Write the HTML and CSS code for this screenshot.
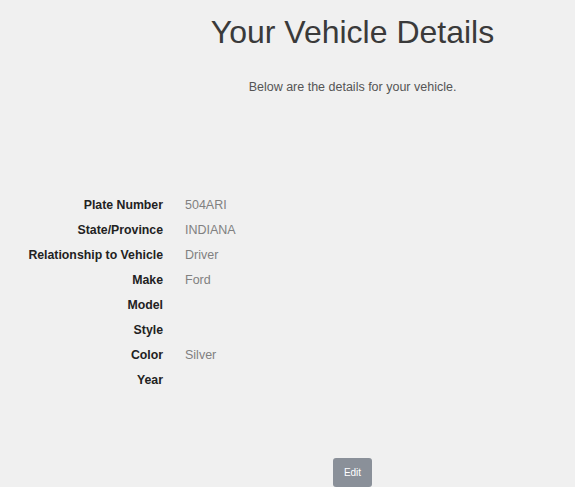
FILE: index.html
```html
<!DOCTYPE html>
<html lang="en">
<head>
    <meta charset="UTF-8">
    <meta name="viewport" content="width=device-width, initial-scale=1.0">
    <title>Your Vehicle Details</title>
    <link rel="stylesheet" href="styles.css">
</head>
<body>
    <div class="page">
        <div class="header">
            <h1>Your Vehicle Details</h1>
            <p class="intro">Below are the details for your vehicle.</p>
        </div>
        <div class="details">
            <div class="label">Plate Number</div>
            <div class="value">504ARI</div>
            <div class="label">State/Province</div>
            <div class="value">INDIANA</div>
            <div class="label">Relationship to Vehicle</div>
            <div class="value">Driver</div>
            <div class="label">Make</div>
            <div class="value">Ford</div>
            <div class="label">Model</div>
            <div class="value"></div>
            <div class="label">Style</div>
            <div class="value"></div>
            <div class="label">Color</div>
            <div class="value">Silver</div>
            <div class="label">Year</div>
            <div class="value"></div>
        </div>
        <div class="actions">
            <button class="edit-btn">Edit</button>
        </div>
    </div>
</body>
</html>
```

FILE: styles.css
```css
body {
    margin: 0;
    background-color: #f0f0f0;
    font-family: "Liberation Sans", Arial, sans-serif;
    color: #333;
}
.page {
    height: 487px;
    overflow: hidden;
}
.header {
    margin-left: 130px;
    text-align: center;
    padding-top: 13px;
}
.header h1 {
    font-size: 32px;
    font-weight: normal;
    margin: 0;
    line-height: 38px;
    color: #3a3a3a;
}
.intro {
    font-size: 12.5px;
    color: #555;
    margin: 29px 0 0;
    line-height: 14px;
}
.details {
    display: grid;
    grid-template-columns: 155px 1fr;
    column-gap: 22px;
    margin-top: 99px;
    margin-left: 8px;
    font-size: 12.5px;
}
.details .label,
.details .value {
    height: 25px;
    line-height: 25px;
}
.details .label {
    text-align: right;
    font-weight: bold;
    font-size: 12.3px;
    color: #222;
}
.details .value {
    color: #808080;
}
.actions {
    margin-left: 130px;
    text-align: center;
    margin-top: 65px;
}
.edit-btn {
    width: 39px;
    height: 29px;
    background-color: #8a9099;
    color: #fff;
    border: none;
    border-radius: 3px;
    font-family: "Liberation Sans", Arial, sans-serif;
    font-size: 10px;
    padding: 0;
    cursor: pointer;
}
```
